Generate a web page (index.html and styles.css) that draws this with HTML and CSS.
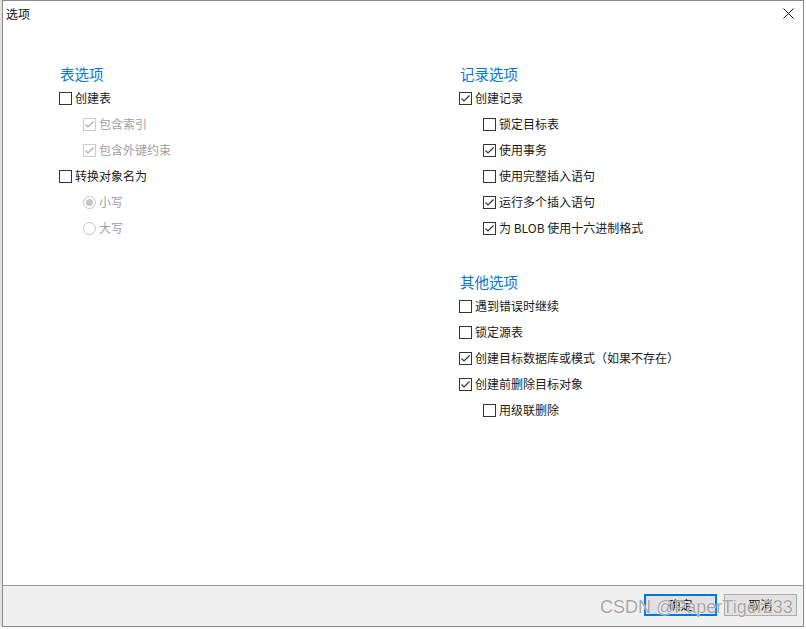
FILE: index.html
```html
<!DOCTYPE html>
<html lang="zh-CN">
<head>
<meta charset="utf-8">
<title>选项</title>
<link rel="stylesheet" href="styles.css">
</head>
<body>
<div class="window">
  <div class="titlebar">
    <span class="title">选项</span>
    <svg class="close" width="11" height="11" viewBox="0 0 11 11"><path d="M0.5 0.5 L10.5 10.5 M10.5 0.5 L0.5 10.5" stroke="#111" stroke-width="1" fill="none"/></svg>
  </div>
  <div class="content">
    <div class="col col-left">
      <div class="heading">表选项</div>
      <div class="row">
        <svg class="cb" viewBox="0 0 13 13"><rect x="0.5" y="0.5" width="12" height="12"/></svg>
        <span class="label">创建表</span>
      </div>
      <div class="row sub disabled">
        <svg class="cb" viewBox="0 0 13 13"><rect x="0.5" y="0.5" width="12" height="12"/><path d="M2.5 6.5 L5 9 L10.5 3.5"/></svg>
        <span class="label">包含索引</span>
      </div>
      <div class="row sub disabled">
        <svg class="cb" viewBox="0 0 13 13"><rect x="0.5" y="0.5" width="12" height="12"/><path d="M2.5 6.5 L5 9 L10.5 3.5"/></svg>
        <span class="label">包含外键约束</span>
      </div>
      <div class="row">
        <svg class="cb" viewBox="0 0 13 13"><rect x="0.5" y="0.5" width="12" height="12"/></svg>
        <span class="label">转换对象名为</span>
      </div>
      <div class="row sub disabled">
        <svg class="rb" viewBox="0 0 13 13"><circle cx="6.5" cy="6.5" r="6"/><circle class="dot" cx="6.5" cy="6.5" r="3.5"/></svg>
        <span class="label">小写</span>
      </div>
      <div class="row sub disabled">
        <svg class="rb" viewBox="0 0 13 13"><circle cx="6.5" cy="6.5" r="6"/></svg>
        <span class="label">大写</span>
      </div>
    </div>
    <div class="col col-right">
      <div class="heading">记录选项</div>
      <div class="row">
        <svg class="cb" viewBox="0 0 13 13"><rect x="0.5" y="0.5" width="12" height="12"/><path d="M2.5 6.5 L5 9 L10.5 3.5"/></svg>
        <span class="label">创建记录</span>
      </div>
      <div class="row sub">
        <svg class="cb" viewBox="0 0 13 13"><rect x="0.5" y="0.5" width="12" height="12"/></svg>
        <span class="label">锁定目标表</span>
      </div>
      <div class="row sub">
        <svg class="cb" viewBox="0 0 13 13"><rect x="0.5" y="0.5" width="12" height="12"/><path d="M2.5 6.5 L5 9 L10.5 3.5"/></svg>
        <span class="label">使用事务</span>
      </div>
      <div class="row sub">
        <svg class="cb" viewBox="0 0 13 13"><rect x="0.5" y="0.5" width="12" height="12"/></svg>
        <span class="label">使用完整插入语句</span>
      </div>
      <div class="row sub">
        <svg class="cb" viewBox="0 0 13 13"><rect x="0.5" y="0.5" width="12" height="12"/><path d="M2.5 6.5 L5 9 L10.5 3.5"/></svg>
        <span class="label">运行多个插入语句</span>
      </div>
      <div class="row sub">
        <svg class="cb" viewBox="0 0 13 13"><rect x="0.5" y="0.5" width="12" height="12"/><path d="M2.5 6.5 L5 9 L10.5 3.5"/></svg>
        <span class="label">为 BLOB 使用十六进制格式</span>
      </div>

      <div class="heading heading-2">其他选项</div>
      <div class="row">
        <svg class="cb" viewBox="0 0 13 13"><rect x="0.5" y="0.5" width="12" height="12"/></svg>
        <span class="label">遇到错误时继续</span>
      </div>
      <div class="row">
        <svg class="cb" viewBox="0 0 13 13"><rect x="0.5" y="0.5" width="12" height="12"/></svg>
        <span class="label">锁定源表</span>
      </div>
      <div class="row">
        <svg class="cb" viewBox="0 0 13 13"><rect x="0.5" y="0.5" width="12" height="12"/><path d="M2.5 6.5 L5 9 L10.5 3.5"/></svg>
        <span class="label">创建目标数据库或模式（如果不存在）</span>
      </div>
      <div class="row">
        <svg class="cb" viewBox="0 0 13 13"><rect x="0.5" y="0.5" width="12" height="12"/><path d="M2.5 6.5 L5 9 L10.5 3.5"/></svg>
        <span class="label">创建前删除目标对象</span>
      </div>
      <div class="row sub">
        <svg class="cb" viewBox="0 0 13 13"><rect x="0.5" y="0.5" width="12" height="12"/></svg>
        <span class="label">用级联删除</span>
      </div>
    </div>
  </div>
  <div class="footer">
    <button class="btn btn-default">确定</button>
    <button class="btn">取消</button>
  </div>
  <div class="watermark">CSDN @PaperTiger233</div>
</div>
</body>
</html>
```

FILE: styles.css
```css
html, body {
  margin: 0;
  padding: 0;
  background: #ffffff;
}

body {
  width: 806px;
  height: 629px;
  overflow: hidden;
  font-family: "Noto Sans CJK SC", "Noto Sans", sans-serif;
  font-size: 12px;
  color: #1a1a1a;
}

.window {
  position: relative;
  box-sizing: border-box;
  margin-left: 2px;
  width: 802px;
  height: 627px;
  border: 1px solid #8a8a8a;
  background: #ffffff;
  display: flex;
  flex-direction: column;
  box-shadow: -2px 0 0 #e2e2e2;
}

.titlebar {
  height: 30px;
  flex: none;
  display: flex;
  align-items: center;
  justify-content: space-between;
  padding-left: 3px;
}

.title {
  font-size: 12px;
  line-height: 14px;
  color: #111;
  margin-top: -4px;
}

.close {
  width: 11px;
  height: 11px;
  margin-right: 9px;
  margin-top: -5px;
}

.content {
  flex: 1;
  display: flex;
  padding-top: 30px;
  padding-left: 56px;
}

.col {
  display: flex;
  flex-direction: column;
}

.col-left {
  width: 400px;
}

.heading {
  height: 24px;
  display: flex;
  align-items: center;
  font-size: 14.5px;
  color: #0a74d2;
  padding-left: 1px;
}

.heading-2 {
  margin-top: 28px;
}

.row {
  height: 26px;
  display: flex;
  align-items: center;
}

.row.sub {
  padding-left: 24px;
}

.label {
  margin-left: 3px;
  line-height: 14px;
  color: #1a1a1a;
  white-space: nowrap;
}

.cb, .rb {
  width: 13px;
  height: 13px;
  flex: none;
}

.cb rect {
  fill: #ffffff;
  stroke: #333333;
  stroke-width: 1;
}

.cb path {
  fill: none;
  stroke: #333333;
  stroke-width: 1.2;
}

.rb circle {
  fill: #ffffff;
  stroke: #c4c4c4;
  stroke-width: 1;
}

.rb .dot {
  fill: #c4c4c4;
  stroke: none;
}

.disabled .label {
  color: #a0a0a0;
}

.disabled .cb rect {
  stroke: #cccccc;
}

.disabled .cb path {
  stroke: #a8a8a8;
}

.footer {
  flex: none;
  box-sizing: border-box;
  height: 41px;
  border-top: 1px solid #9a9a9a;
  background: #f0f0f0;
  display: flex;
  justify-content: flex-end;
  align-items: flex-start;
  gap: 7px;
  padding-top: 8px;
  padding-right: 6px;
}

.btn {
  box-sizing: border-box;
  width: 73px;
  height: 22px;
  margin: 0;
  padding: 0;
  background: #e1e1e1;
  border: 1px solid #adadad;
  font-family: "Noto Sans CJK SC", "Noto Sans", sans-serif;
  font-size: 12px;
  color: #111;
  line-height: 18px;
}

.btn-default {
  border: 2px solid #0078d7;
}

.watermark {
  position: absolute;
  left: 597px;
  top: 596px;
  font-family: "Liberation Sans", Arial, sans-serif;
  font-size: 18px;
  line-height: 20px;
  color: rgba(140, 140, 140, 0.8);
  text-shadow: 0 0 1px #ffffff, 0 0 1px #ffffff;
  white-space: nowrap;
  pointer-events: none;
}
```
